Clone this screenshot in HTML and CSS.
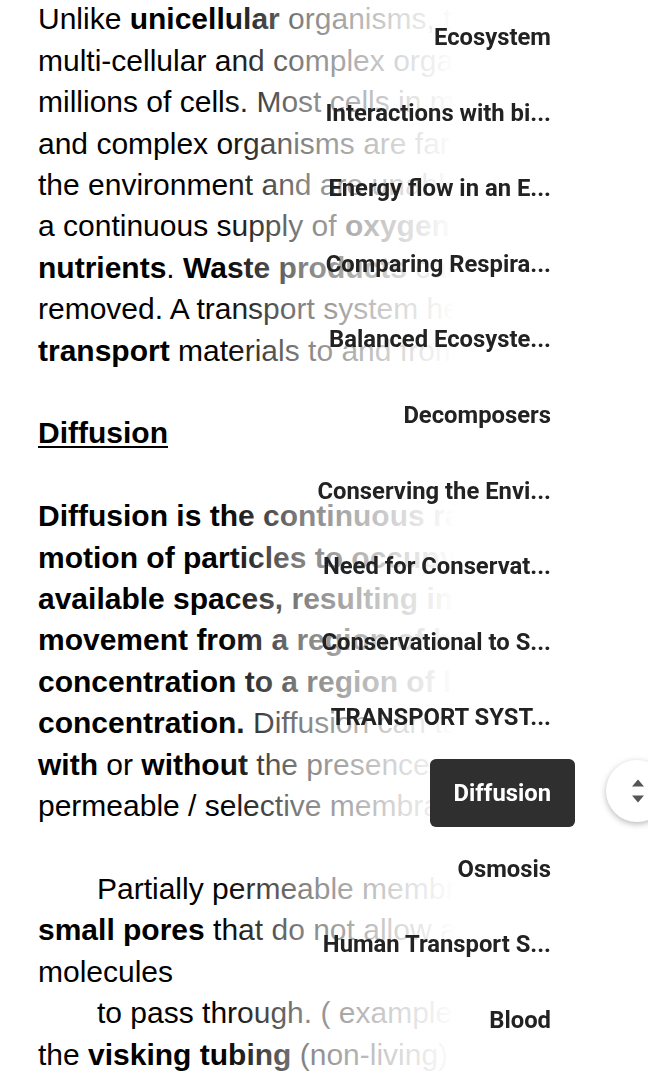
FILE: index.html
```html
<!DOCTYPE html>
<html lang="en">
<head>
<meta charset="utf-8">
<title>Transport Systems</title>
<link rel="stylesheet" href="styles.css">
</head>
<body>
<main class="doc">
  <p class="para">Unlike <b>unicellular</b> organisms, the cells of<br>multi-cellular and complex organisms consist of<br>millions of cells. Most cells in multi-cellular<br>and complex organisms are far away from<br>the environment and are unable to obtain<br>a continuous supply of <b>oxygen</b> and<br><b>nutrients</b>. <b>Waste products</b> cannot be<br>removed. A transport system helps to<br><b>transport</b> materials to and from cells.</p>
  <h2 class="heading">Diffusion</h2>
  <p class="para"><b>Diffusion is the continuous random<br>motion of particles to occupy<br>available spaces, resulting in a net<br>movement from a region of high<br>concentration to a region of low<br>concentration.</b> Diffusion can take place<br><b>with</b> or <b>without</b> the presence of a partially<br>permeable / selective membrane.</p>
  <p class="para"><span class="tab"></span>Partially permeable membranes have<br><b>small pores</b> that do not allow all<br>molecules<br><span class="tab"></span>to pass through. ( example: cellophane,<br>the <b>visking tubing</b> (non-living) and</p>
</main>
<div class="fade"></div>
<nav class="toc">
  <a class="toc-item" title="Ecosystem">Ecosystem</a>
  <a class="toc-item" title="Interactions with biotic factors">Interactions with bi...</a>
  <a class="toc-item" title="Energy flow in an Ecosystem">Energy flow in an E...</a>
  <a class="toc-item" title="Comparing Respiration and Photosynthesis">Comparing Respira...</a>
  <a class="toc-item" title="Balanced Ecosystem">Balanced Ecosyste...</a>
  <a class="toc-item" title="Decomposers">Decomposers</a>
  <a class="toc-item" title="Conserving the Environment">Conserving the Envi...</a>
  <a class="toc-item" title="Need for Conservation">Need for Conservat...</a>
  <a class="toc-item" title="Conservational to Sustainable">Conservational to S...</a>
  <a class="toc-item" title="TRANSPORT SYSTEMS">TRANSPORT SYST...</a>
  <a class="toc-item active" title="Diffusion">Diffusion</a>
  <a class="toc-item" title="Osmosis">Osmosis</a>
  <a class="toc-item" title="Human Transport System">Human Transport S...</a>
  <a class="toc-item" title="Blood">Blood</a>
</nav>
<button class="scroll-btn" aria-label="Navigate">
  <svg width="14" height="26" viewBox="0 0 14 26" aria-hidden="true">
    <path d="M1 8.5 L7 1.5 L13 8.5 Z" fill="#555"/>
    <path d="M1 17.5 L7 24.5 L13 17.5 Z" fill="#555"/>
  </svg>
</button>
</body>
</html>
```
FILE: styles.css
```css
html, body {
  margin: 0;
  padding: 0;
  background: #fff;
  overflow: hidden;
}
body {
  width: 648px;
  height: 1080px;
}
.doc {
  margin-top: -1.6px;
  padding-left: 38px;
  font-family: "Liberation Sans", Arial, sans-serif;
  font-size: 30px;
  line-height: 41.4px;
  color: #000;
  white-space: nowrap;
  overflow: hidden;
}
.para {
  margin: 0 0 41.4px 0;
}
.heading {
  margin: 0 0 41.4px 0;
  font-size: 30px;
  font-weight: 700;
  line-height: 41.4px;
  text-decoration: underline;
  text-underline-offset: 3px;
  text-decoration-thickness: 2px;
}
.tab {
  display: inline-block;
  width: 59px;
}
.fade {
  position: fixed;
  inset: 0;
  pointer-events: none;
  background: linear-gradient(to right, rgba(255,255,255,0) 222px, rgba(255,255,255,0.5) 300px, rgba(255,255,255,0.85) 400px, #fff 455px);
}
.toc {
  position: fixed;
  top: 3px;
  right: 73px;
  display: flex;
  flex-direction: column;
  align-items: flex-end;
  gap: 7.6px;
  font-family: Roboto, "Noto Sans", sans-serif;
  font-weight: 700;
  font-size: 23.8px;
}
.toc-item {
  height: 68px;
  padding: 0 24px;
  display: flex;
  align-items: center;
  border-radius: 6px;
  color: #222;
  white-space: nowrap;
}
.toc-item.active {
  background: #2f2f2f;
  color: #fff;
}
.scroll-btn {
  position: fixed;
  left: 606px;
  top: 760px;
  width: 62px;
  height: 62px;
  border: none;
  border-radius: 50%;
  background: #fff;
  box-shadow: 0 2px 6px rgba(0,0,0,0.28);
  padding: 0 0 0 2px;
  display: flex;
  align-items: center;
  justify-content: center;
}
.scroll-btn svg {
  display: block;
}
```
